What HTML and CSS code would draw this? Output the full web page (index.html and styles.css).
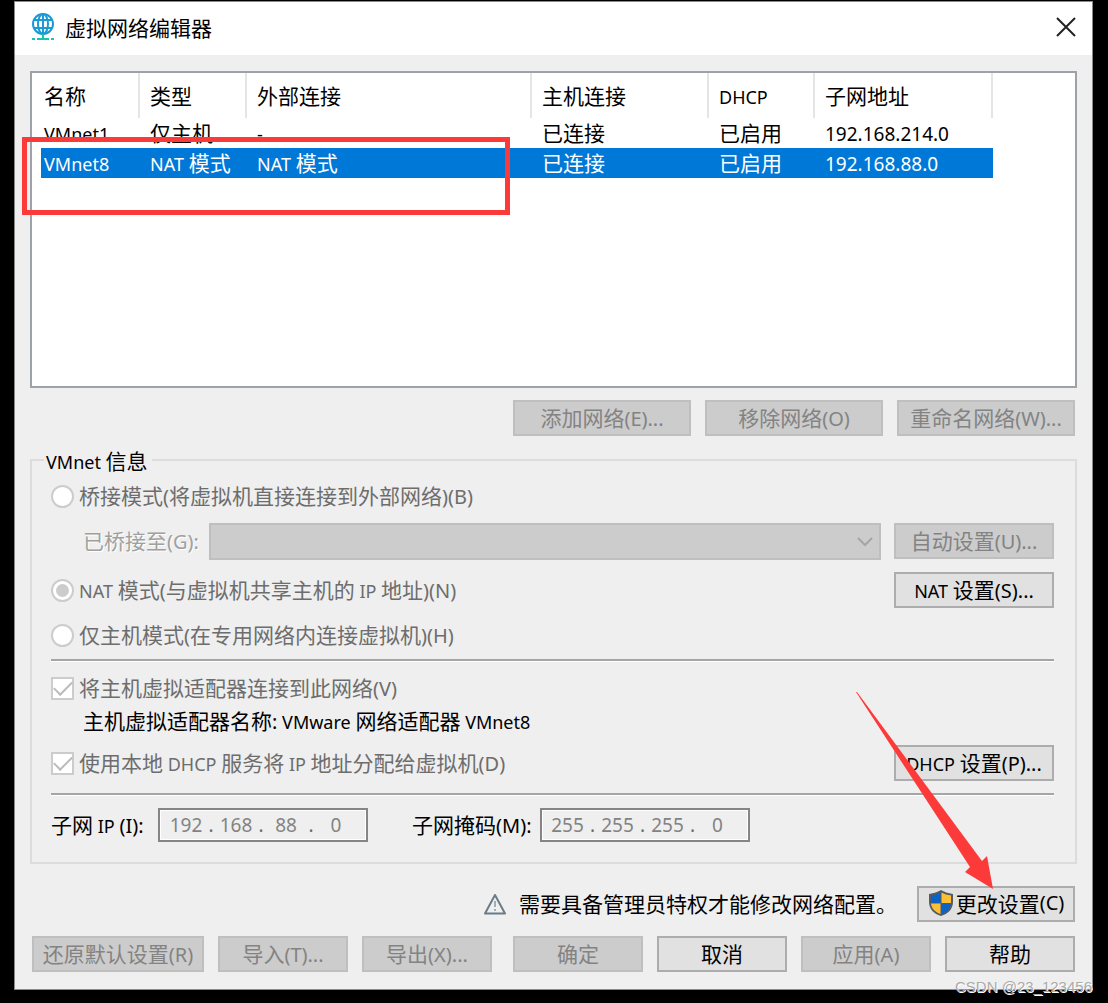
FILE: index.html
```
<!DOCTYPE html>
<html lang="zh-CN">
<head>
    <meta charset="UTF-8">
    <meta name="viewport" content="width=device-width, initial-scale=1.0">
    <title>虚拟网络编辑器</title>
    <link rel="stylesheet" href="styles.css">
</head>
<body>
    <div class="window">
        <header class="titlebar">
            <svg class="app-icon" viewBox="0 0 24 28" fill="none" stroke="#1b9ad6" stroke-width="2">
                <circle cx="12" cy="11" r="10"/>
                <ellipse cx="12" cy="11" rx="5" ry="10"/>
                <path d="M12 1v20M3 7h18M3 15h18"/>
                <path d="M1 26h3M6 26h12M20 26h3M12 21v4" stroke="#1cc4ae"/>
            </svg>
            <h1>虚拟网络编辑器</h1>
            <button type="button" class="close" aria-label="关闭">
                <svg viewBox="0 0 20 20" stroke="#222" stroke-width="2"><path d="M1 1l18 18M19 1L1 19"/></svg>
            </button>
        </header>

        <main class="content">
            <div class="list">
                <table>
                    <colgroup>
                        <col class="col-name">
                        <col class="col-type">
                        <col class="col-external">
                        <col class="col-host">
                        <col class="col-dhcp">
                        <col class="col-subnet">
                    </colgroup>
                    <thead>
                        <tr>
                            <th>名称</th>
                            <th>类型</th>
                            <th>外部连接</th>
                            <th>主机连接</th>
                            <th><span class="en">DHCP</span></th>
                            <th>子网地址</th>
                        </tr>
                    </thead>
                    <tbody>
                        <tr>
                            <td><span class="en">VMnet1</span></td>
                            <td>仅主机</td>
                            <td><span class="en">-</span></td>
                            <td>已连接</td>
                            <td>已启用</td>
                            <td><span class="num">192.168.214.0</span></td>
                        </tr>
                        <tr class="selected">
                            <td><span class="en">VMnet8</span></td>
                            <td><span class="en">NAT</span> 模式</td>
                            <td><span class="en">NAT</span> 模式</td>
                            <td>已连接</td>
                            <td>已启用</td>
                            <td><span class="num">192.168.88.0</span></td>
                        </tr>
                    </tbody>
                </table>
                <div class="highlight"></div>
            </div>

            <div class="list-actions">
                <button type="button" disabled>添加网络<span class="key">(E)...</span></button>
                <button type="button" disabled>移除网络<span class="key">(O)</span></button>
                <button type="button" disabled>重命名网络<span class="key">(W)...</span></button>
            </div>

            <fieldset>
                <legend><span class="en">VMnet</span> 信息</legend>

                <div class="row bridge">
                    <input type="radio" name="mode" id="bridge" disabled>
                    <label for="bridge">桥接模式<span class="key">(</span>将虚拟机直接连接到外部网络<span class="key">)(B)</span></label>
                </div>

                <div class="row bridge-to">
                    <label for="adapter">已桥接至<span class="key">(G):</span></label>
                    <div class="select">
                        <select id="adapter" disabled></select>
                        <svg viewBox="0 0 16 10" fill="none" stroke="#a5a5a5" stroke-width="2"><path d="M1 1l7 7 7-7"/></svg>
                    </div>
                    <button type="button" disabled>自动设置<span class="key">(U)...</span></button>
                </div>

                <div class="row nat">
                    <input type="radio" name="mode" id="nat" checked disabled>
                    <label for="nat"><span class="en">NAT</span> 模式<span class="key">(</span>与虚拟机共享主机的 <span class="en">IP</span> 地址<span class="key">)(N)</span></label>
                    <button type="button"><span class="en">NAT</span> 设置<span class="key">(S)...</span></button>
                </div>

                <div class="row host-only">
                    <input type="radio" name="mode" id="hostonly" disabled>
                    <label for="hostonly">仅主机模式<span class="key">(</span>在专用网络内连接虚拟机<span class="key">)(H)</span></label>
                </div>

                <hr>

                <div class="row connect">
                    <input type="checkbox" id="connect" checked disabled>
                    <label for="connect">将主机虚拟适配器连接到此网络<span class="key">(V)</span></label>
                </div>

                <p class="adapter-name">主机虚拟适配器名称<span class="key">:</span> <span class="en">VMware</span> 网络适配器 <span class="en">VMnet8</span></p>

                <div class="row dhcp">
                    <input type="checkbox" id="dhcp" checked disabled>
                    <label for="dhcp">使用本地 <span class="en">DHCP</span> 服务将 <span class="en">IP</span> 地址分配给虚拟机<span class="key">(D)</span></label>
                    <button type="button"><span class="en">DHCP</span> 设置<span class="key">(P)...</span></button>
                </div>

                <hr>

                <div class="subnet">
                    <label for="ip1">子网 <span class="en">IP</span> <span class="key">(I):</span></label>
                    <div class="ip">
                        <input type="text" id="ip1" value="192" disabled><span>.</span>
                        <input type="text" value="168" aria-label="子网 IP 2" disabled><span>.</span>
                        <input type="text" value="88" aria-label="子网 IP 3" disabled><span>.</span>
                        <input type="text" value="0" aria-label="子网 IP 4" disabled>
                    </div>
                    <label for="mask1" class="mask-label">子网掩码<span class="key">(M):</span></label>
                    <div class="ip">
                        <input type="text" id="mask1" value="255" disabled><span>.</span>
                        <input type="text" value="255" aria-label="子网掩码 2" disabled><span>.</span>
                        <input type="text" value="255" aria-label="子网掩码 3" disabled><span>.</span>
                        <input type="text" value="0" aria-label="子网掩码 4" disabled>
                    </div>
                </div>
            </fieldset>

            <div class="notice">
                <svg class="warn" viewBox="0 0 24 22" fill="none" stroke="#6b7c89" stroke-width="2">
                    <path d="M12 2L22 20.500H2z" stroke-linejoin="round"/>
                    <path d="M12 8v6M12 16v2" stroke="#a3adb5"/>
                </svg>
                <span class="notice-text">需要具备管理员特权才能修改网络配置。</span>
                <div class="change">
                    <button type="button">
                        <svg viewBox="0 0 26 28">
                            <path d="M13 1C16 3 20 4 25 5V13C25 20 20 25 13 27C6 25 1 20 1 13V5C6 4 10 3 13 1z" fill="#555b60"/>
                            <path d="M12.500 3.500V14H3V6.500C6.500 6 10 5 12.500 3.500z" fill="#0b63c5"/>
                            <path d="M13.500 3.500V14H23V6.500C19.500 6 16 5 13.500 3.500z" fill="#ffbf35"/>
                            <path d="M3 14.500H12.500V25C7 23 3.500 19.500 3 14.500z" fill="#ffbf35"/>
                            <path d="M23 14.500H13.500V25C19 23 22.500 19.500 23 14.500z" fill="#0b63c5"/>
                        </svg>更改设置<span class="key">(C)</span>
                    </button>
                    <svg class="arrow" viewBox="0 0 138 198"><path d="M0 0L1 0L126 169L131 164L137 197L109 180L114 175z" fill="#fd3a3a"/></svg>
                </div>
            </div>

            <footer>
                <div class="group">
                    <button type="button" class="restore" disabled>还原默认设置<span class="key">(R)</span></button>
                    <button type="button" disabled>导入<span class="key">(T)...</span></button>
                    <button type="button" disabled>导出<span class="key">(X)...</span></button>
                </div>
                <div class="group">
                    <button type="button" disabled>确定</button>
                    <button type="button">取消</button>
                    <button type="button" disabled>应用<span class="key">(A)</span></button>
                    <button type="button">帮助</button>
                </div>
            </footer>
        </main>
        <div class="watermark">CSDN @23_123456</div>
    </div>
</body>
</html>
```
FILE: styles.css
```
* {
    box-sizing: border-box;
}

body {
    margin: 0;
    padding: 1px 15px 14px 14px;
    background: #000;
    color: #000;
    font-family: "Noto Sans CJK SC", sans-serif;
    font-size: 21px;
    line-height: 28px;
}

button,
input,
select {
    font: inherit;
    margin: 0;
}

/* latin text is set smaller than the chinese around it */
.en,
.num,
.key {
    font-family: "Noto Sans", sans-serif;
    font-size: 18px;
    line-height: 20px;
}

.num {
    font-size: 19px;
}

.key {
    font-size: 20px;
}

.window {
    position: relative;
    background: #efefef;
    border: 1px solid #8a8a8a;
}

/* title bar */
.titlebar {
    display: flex;
    align-items: center;
    height: 53px;
    padding: 0 16px 4px;
    background: #fff;
}

.app-icon {
    width: 24px;
    height: 28px;
}

h1 {
    flex: 1;
    margin: 0 0 0 10px;
    font-size: 21px;
    font-weight: normal;
}

.close {
    display: flex;
    padding: 0;
    border: none;
    background: none;
}

.close svg {
    width: 20px;
    height: 20px;
}

.content {
    padding: 16px 15px 17px 15px;
}

/* network list */
.list {
    position: relative;
    height: 317px;
    padding-left: 9px;
    background: #fff;
    border: 2px solid #9da2a9;
}

table {
    table-layout: fixed;
    width: 952px;
    border-collapse: separate;
    border-spacing: 0;
}

.col-name { width: 99px; }
.col-type { width: 107px; }
.col-external { width: 285px; }
.col-host { width: 177px; }
.col-dhcp { width: 106px; }
.col-subnet { width: 178px; }

th {
    height: 45px;
    padding: 0 0 2px 10px;
    border-right: 2px solid #e5e5e5;
    font-weight: normal;
    text-align: left;
}

td {
    height: 30px;
    padding: 0 0 2px 10px;
    line-height: 28px;
}

th:first-child,
td:first-child {
    padding-left: 3px;
}

.selected {
    background: #0078d7;
    color: #fff;
}

.highlight {
    position: absolute;
    left: -10px;
    top: 64px;
    width: 488px;
    height: 78px;
    border: 5px solid #fd3a3a;
}

/* buttons */
.content button {
    height: 36px;
    padding: 0 0 2px;
    background: #e1e1e1;
    border: 2px solid #adadad;
    color: #000;
    text-align: center;
    white-space: nowrap;
}

.content button:disabled {
    background: #ccc;
    border-color: #bfbfbf;
    color: #838383;
}

.list-actions {
    display: flex;
    justify-content: flex-end;
    gap: 14px;
    margin-top: 12px;
    padding-right: 2px;
}

.list-actions button {
    width: 178px;
}

/* vmnet info */
fieldset {
    margin: 10px 0 0;
    padding: 0 21px 20px 19px;
    border: 2px solid #dcdcdc;
}

legend {
    margin-left: -7px;
    padding: 0 4px 0 2px;
}

label,
.notice-text {
    padding-bottom: 2px;
}

.row {
    display: flex;
    align-items: center;
    color: #6d6d6d;
}

.row button {
    width: 160px;
    margin-left: auto;
}

.bridge { height: 44px; }
.bridge-to { height: 46px; }
.nat { height: 52px; }
.host-only { height: 38px; }
.connect { height: 36px; }
.dhcp { height: 50px; }

.bridge-to label {
    margin-left: 32px;
    color: #a0a0a0;
    text-shadow: 1px 1px #fff;
}

input[type="radio"],
input[type="checkbox"] {
    appearance: none;
    display: grid;
    place-items: center;
    flex: none;
    width: 23px;
    height: 23px;
    margin-right: 5px;
    background: #fff;
    border: 2px solid #ccc;
}

input[type="radio"] {
    border-radius: 50%;
}

input[type="radio"]:checked::before {
    content: "";
    width: 13px;
    height: 13px;
    border-radius: 50%;
    background: #ccc;
}

input[type="checkbox"]:checked::before {
    content: "";
    width: 16px;
    height: 8px;
    margin-bottom: 5px;
    border-left: 2px solid #bbb;
    border-bottom: 2px solid #bbb;
    transform: rotate(-45deg);
}

.select {
    position: relative;
    flex: 1;
    display: flex;
    margin: 0 13px 0 10px;
}

select {
    appearance: none;
    width: 100%;
    height: 37px;
    background: #ccc;
    border: 2px solid #bfbfbf;
    border-radius: 0;
    opacity: 1;
}

.select svg {
    position: absolute;
    right: 8px;
    top: 14px;
    width: 16px;
    height: 10px;
}

hr {
    height: 3px;
    margin: 5px 0 8px;
    border: none;
    border-top: 2px solid #a5a5a5;
    border-bottom: 1px solid #fff;
}

.adapter-name {
    height: 32px;
    margin: 0 0 0 32px;
    line-height: 28px;
}

.subnet {
    display: flex;
    align-items: center;
    padding-top: 4px;
}

.subnet label {
    min-width: 99px;
}

.ip {
    display: flex;
    align-items: center;
    width: 210px;
    height: 34px;
    margin-left: 8px;
    padding: 0 6px;
    border: 2px solid #858585;
    outline: 1px solid #fff;
    outline-offset: -3px;
    color: #6d6d6d;
    font-family: "Noto Sans", sans-serif;
    font-size: 19px;
}

.ip input {
    width: 40px;
    padding: 0;
    border: none;
    background: none;
    color: #838383;
    text-align: center;
}

.ip span {
    width: 10px;
    text-align: center;
}

.mask-label {
    margin-left: 44px;
}

/* admin notice */
.notice {
    display: flex;
    align-items: center;
    justify-content: flex-end;
    margin-top: 22px;
    padding-right: 2px;
}

.warn {
    width: 24px;
    height: 22px;
    margin-right: 12px;
}

.change {
    position: relative;
    margin-left: 20px;
}

.change button {
    display: flex;
    align-items: center;
    justify-content: center;
    width: 158px;
}

.change button svg {
    width: 26px;
    height: 28px;
    margin-right: 2px;
}

.arrow {
    position: absolute;
    right: 81px;
    bottom: 32px;
    width: 138px;
    height: 198px;
    pointer-events: none;
}

footer {
    display: flex;
    justify-content: space-between;
    margin-top: 14px;
    padding: 0 2px;
}

.group {
    display: flex;
    gap: 14px;
}

footer button {
    width: 130px;
}

footer .restore {
    width: 172px;
}

.watermark {
    position: absolute;
    right: 0;
    bottom: -8px;
    color: #aaa;
    font-family: "Liberation Sans", Arial, sans-serif;
    font-size: 15px;
    line-height: 20px;
    text-shadow: 1px 1px #fff;
}
```
